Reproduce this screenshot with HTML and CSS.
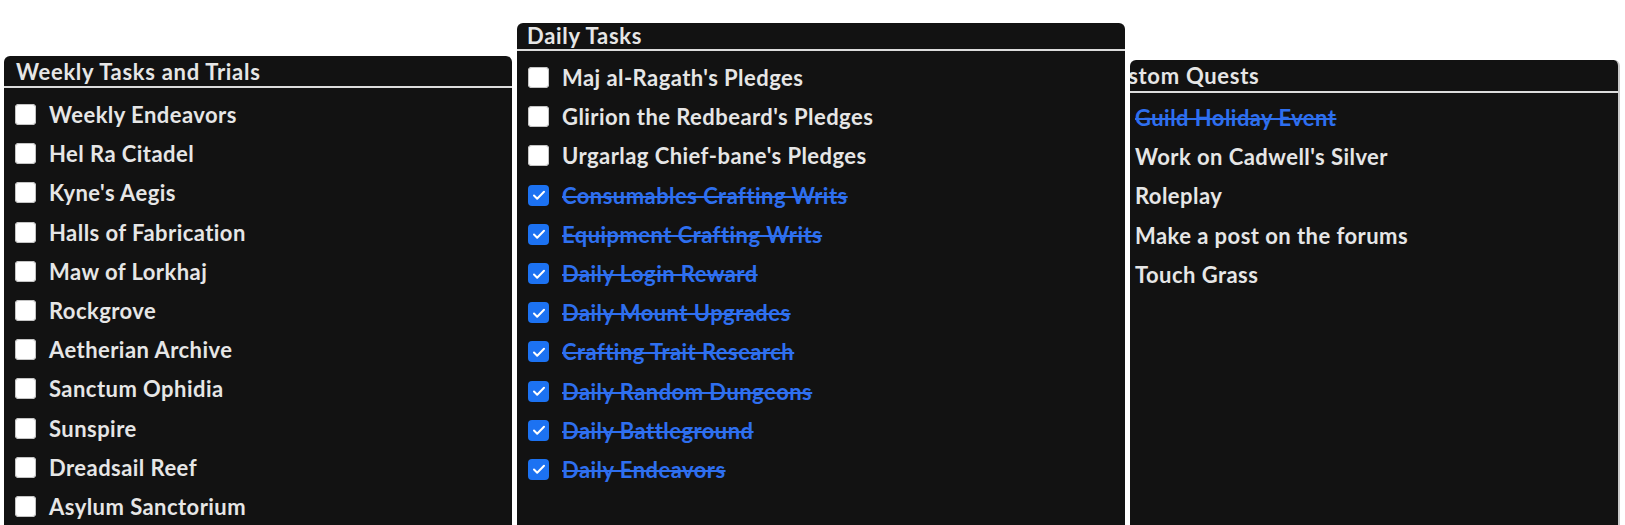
FILE: index.html
```html
<!DOCTYPE html>
<html lang="en">
<head>
    <meta charset="UTF-8">
    <meta name="viewport" content="width=device-width, initial-scale=1.0">
    <title>Tamriel Task Tracker</title>
    <link rel="stylesheet" href="styles.css">
</head>
<body>

    <div class="board">

        <!-- weekly list -->
        <section class="panel panel-weekly">
            <h3 class="panel-title">Weekly Tasks and Trials</h3>
            <ul class="task-list">
                <li><label class="task"><input type="checkbox"><span class="mark"></span><span class="task-name">Weekly Endeavors</span></label></li>
                <li><label class="task"><input type="checkbox"><span class="mark"></span><span class="task-name">Hel Ra Citadel</span></label></li>
                <li><label class="task"><input type="checkbox"><span class="mark"></span><span class="task-name">Kyne's Aegis</span></label></li>
                <li><label class="task"><input type="checkbox"><span class="mark"></span><span class="task-name">Halls of Fabrication</span></label></li>
                <li><label class="task"><input type="checkbox"><span class="mark"></span><span class="task-name">Maw of Lorkhaj</span></label></li>
                <li><label class="task"><input type="checkbox"><span class="mark"></span><span class="task-name">Rockgrove</span></label></li>
                <li><label class="task"><input type="checkbox"><span class="mark"></span><span class="task-name">Aetherian Archive</span></label></li>
                <li><label class="task"><input type="checkbox"><span class="mark"></span><span class="task-name">Sanctum Ophidia</span></label></li>
                <li><label class="task"><input type="checkbox"><span class="mark"></span><span class="task-name">Sunspire</span></label></li>
                <li><label class="task"><input type="checkbox"><span class="mark"></span><span class="task-name">Dreadsail Reef</span></label></li>
                <li><label class="task"><input type="checkbox"><span class="mark"></span><span class="task-name">Asylum Sanctorium</span></label></li>
            </ul>
        </section>

        <!-- daily list -->
        <section class="panel panel-daily">
            <h3 class="panel-title">Daily Tasks</h3>
            <ul class="task-list">
                <li><label class="task"><input type="checkbox"><span class="mark"></span><span class="task-name">Maj al-Ragath's Pledges</span></label></li>
                <li><label class="task"><input type="checkbox"><span class="mark"></span><span class="task-name">Glirion the Redbeard's Pledges</span></label></li>
                <li><label class="task"><input type="checkbox"><span class="mark"></span><span class="task-name">Urgarlag Chief-bane's Pledges</span></label></li>
                <li><label class="task"><input type="checkbox" checked><span class="mark"><svg viewBox="0 0 20 20"><path d="M5 10.5l3.2 3.2L15 6.8"/></svg></span><span class="task-name">Consumables Crafting Writs</span></label></li>
                <li><label class="task"><input type="checkbox" checked><span class="mark"><svg viewBox="0 0 20 20"><path d="M5 10.5l3.2 3.2L15 6.8"/></svg></span><span class="task-name">Equipment Crafting Writs</span></label></li>
                <li><label class="task"><input type="checkbox" checked><span class="mark"><svg viewBox="0 0 20 20"><path d="M5 10.5l3.2 3.2L15 6.8"/></svg></span><span class="task-name">Daily Login Reward</span></label></li>
                <li><label class="task"><input type="checkbox" checked><span class="mark"><svg viewBox="0 0 20 20"><path d="M5 10.5l3.2 3.2L15 6.8"/></svg></span><span class="task-name">Daily Mount Upgrades</span></label></li>
                <li><label class="task"><input type="checkbox" checked><span class="mark"><svg viewBox="0 0 20 20"><path d="M5 10.5l3.2 3.2L15 6.8"/></svg></span><span class="task-name">Crafting Trait Research</span></label></li>
                <li><label class="task"><input type="checkbox" checked><span class="mark"><svg viewBox="0 0 20 20"><path d="M5 10.5l3.2 3.2L15 6.8"/></svg></span><span class="task-name">Daily Random Dungeons</span></label></li>
                <li><label class="task"><input type="checkbox" checked><span class="mark"><svg viewBox="0 0 20 20"><path d="M5 10.5l3.2 3.2L15 6.8"/></svg></span><span class="task-name">Daily Battleground</span></label></li>
                <li><label class="task"><input type="checkbox" checked><span class="mark"><svg viewBox="0 0 20 20"><path d="M5 10.5l3.2 3.2L15 6.8"/></svg></span><span class="task-name">Daily Endeavors</span></label></li>
            </ul>
        </section>

        <!-- user-added quests, scrolled sideways a bit -->
        <section class="panel panel-custom">
            <div class="scroll-inner">
                <h3 class="panel-title">Custom Quests</h3>
                <ul class="task-list">
                    <li><label class="task"><input type="checkbox" checked><span class="mark"><svg viewBox="0 0 20 20"><path d="M5 10.5l3.2 3.2L15 6.8"/></svg></span><span class="task-name">Guild Holiday Event</span></label></li>
                    <li><label class="task"><input type="checkbox"><span class="mark"></span><span class="task-name">Work on Cadwell's Silver</span></label></li>
                    <li><label class="task"><input type="checkbox"><span class="mark"></span><span class="task-name">Roleplay</span></label></li>
                    <li><label class="task"><input type="checkbox"><span class="mark"></span><span class="task-name">Make a post on the forums</span></label></li>
                    <li><label class="task"><input type="checkbox"><span class="mark"></span><span class="task-name">Touch Grass</span></label></li>
                </ul>
            </div>
        </section>

    </div>

</body>
</html>
```

FILE: styles.css
```css
html, body {
    margin: 0;
    height: 100%;
    overflow: hidden;
    background: #fff;
}

body {
    font-family: Lato, "Liberation Sans", sans-serif;
}

.board {
    display: flex;
    align-items: stretch;
    gap: 5px;
    padding-left: 4px;
    height: 525px;
}

.panel {
    background-color: #121212;
    color: #e6e6e6;
    border-radius: 6px 6px 0 0;
    overflow: hidden;
}

.panel-weekly {
    width: 508px;
    margin-top: 56px;
}

.panel-daily {
    width: 608px;
    margin-top: 23px;
}

.panel-custom {
    width: 488px;
    margin-top: 60px;
    border-right: 2px solid #c9c9c9;
}

.scroll-inner {
    width: calc(100% + 40px);
    margin-left: -40px;
}

.panel-title {
    margin: 0;
    height: 30px;
    padding: 0 12px;
    font-size: 22px;
    font-weight: 700;
    letter-spacing: 0.7px;
    line-height: 31px;
    border-bottom: 2px solid #dcdcdc;
}

.panel-daily .panel-title {
    height: 26px;
    line-height: 25px;
    padding-left: 10px;
}

.panel-custom .panel-title {
    height: 31px;
    padding-left: 10px;
}

.task-list {
    list-style: none;
    margin: 0;
    padding: 7px 0 0 11px;
}

.panel-custom .task-list {
    padding-top: 5px;
}

.task {
    display: flex;
    align-items: center;
    gap: 13px;
    height: 39.2px;
    font-size: 22px;
    font-weight: 700;
    letter-spacing: 0.45px;
    cursor: pointer;
}

.task input {
    display: none;
}

.mark {
    width: 21px;
    height: 21px;
    flex: none;
    border-radius: 4px;
    background-color: #fff;
    box-shadow: inset 0 0 0 1px #c4c4c4;
    display: flex;
    align-items: center;
    justify-content: center;
}

.mark svg {
    width: 20px;
    height: 20px;
    fill: none;
    stroke: #fff;
    stroke-width: 2;
    stroke-linecap: round;
    stroke-linejoin: round;
}

.task input:checked + .mark {
    background-color: #1c72f2;
    box-shadow: none;
}

.task input:checked ~ .task-name {
    color: #2e6fef;
    text-decoration: line-through;
    text-decoration-thickness: 2px;
}
```
